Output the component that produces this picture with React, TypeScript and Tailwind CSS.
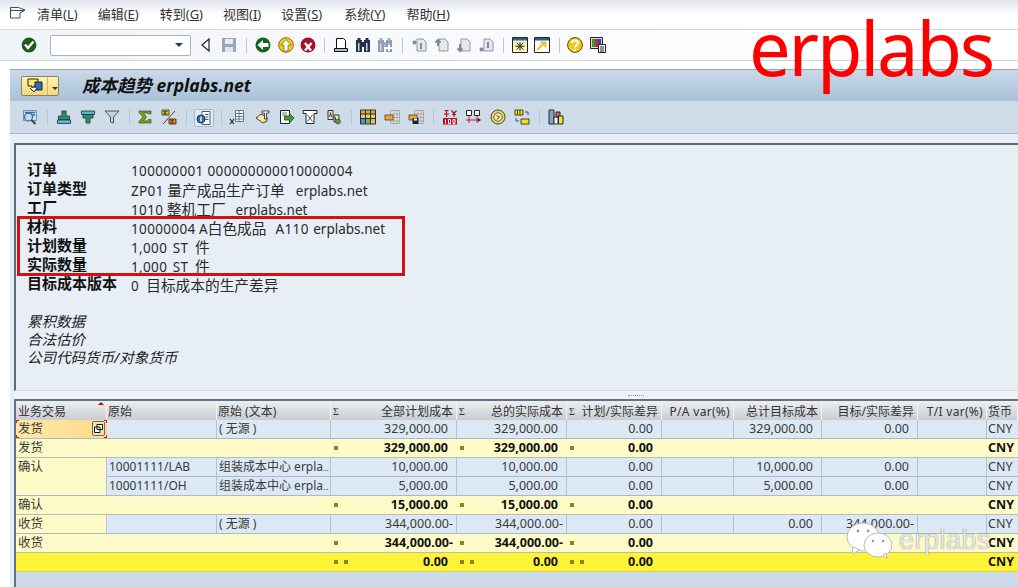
import React from "react";

const colWidths = ["w-[91px]", "w-[110px]", "w-[114px]", "w-[126px]", "w-[110px]", "w-[95px]", "w-[72px]", "w-[88px]", "w-[96px]", "w-[69px]", "w-[31px]"];

const Ic = ({ children, className = "" }: { children: React.ReactNode; className?: string }) => (
    <svg viewBox="0 0 16 16" className={`w-4 h-4 shrink-0 ${className}`}>
        {children}
    </svg>
);

const Slot = ({ children, className = "" }: { children: React.ReactNode; className?: string }) => (
    <div className={`w-[22px] h-4 flex justify-center shrink-0 ${className}`}>{children}</div>
);

const Sep = ({ className = "" }: { className?: string }) => <div className={`w-px h-[15px] bg-[#b9c6d3] shrink-0 ${className}`} />;

const CheckIcon = () => (
    <Ic>
        <circle cx="8" cy="8" r="7.4" fill="#1f5a1e" />
        <path d="M4 7.5 7 11 12.5 4.5" stroke="#fff" strokeWidth="2.4" fill="none" />
    </Ic>
);
const BackTri = () => (
    <Ic>
        <path d="M11 2 4 8l7 6z" fill="#fff" stroke="#222" strokeWidth="1.2" />
    </Ic>
);
const SaveIcon = () => (
    <Ic>
        <path d="M1 1h14v14H1z" fill="#9aa6bb" />
        <path d="M4 2h8v5H4z" fill="#e6eaf2" />
        <path d="M4 10h8v5H4z" fill="#dfe4ee" />
    </Ic>
);
const BackIcon = () => (
    <Ic>
        <circle cx="8" cy="8" r="7.5" fill="#14641f" />
        <path d="M2.5 8 8 3v3h5.5v4H8v3z" fill="#fff" />
    </Ic>
);
const UpIcon = () => (
    <Ic>
        <circle cx="8" cy="8" r="7.3" fill="#f1cc1d" stroke="#8a6b10" />
        <path d="M8 2.5 13 8h-3v6H6V8H3z" fill="#fff" stroke="#5a4a10" strokeWidth=".6" />
    </Ic>
);
const CancelIcon = () => (
    <Ic>
        <circle cx="8" cy="8" r="7.5" fill="#a5102a" />
        <path d="m5 6 6 7.5M11.5 6 5 13.5" stroke="#fff" strokeWidth="2.4" />
    </Ic>
);
const PrintIcon = () => (
    <Ic>
        <path d="M3.5 1.5h7l2 2v8h-9z" fill="#fff" stroke="#111" />
        <path d="M1.5 11.5h13v3h-13z" fill="#aeb8c8" stroke="#111" />
    </Ic>
);
const FindIcon = ({ plus }: { plus?: boolean }) => (
    <Ic>
        <path d="M1 3h6v12H1zM9 3h6v12H9z" fill={plus ? "#8d9ab2" : "#25304a"} />
        <path d="M2.5 1h3v3h-3zM10.5 1h3v3h-3zM7 5h2v5H7z" fill={plus ? "#a7b1c4" : "#25304a"} />
        <path d="M3 6h1.5v8H3zM11 6h1.5v8H11z" fill="#cdd4e2" />
        {plus && <path d="M9 11h6M12 8v6" stroke="#fff" strokeWidth="2" />}
    </Ic>
);
const PageGray = ({ arrow }: { arrow: string }) => (
    <Ic>
        <path d="M5 2h6l3 3v9H5z" fill="#e4e8ef" stroke="#8d98a8" />
        <path d={arrow} stroke="#7f8b9c" strokeWidth="2" fill="none" />
    </Ic>
);
const WinStar = () => (
    <Ic>
        <path d="M.5.5h15v15H.5z" fill="#fdf9b5" stroke="#222" />
        <path d="M1 1h14v2.5H1z" fill="#2a5d94" />
        <path d="M8 5v8.5M3.5 9.2h9M4.5 5.7l7 7M11.5 5.7l-7 7" stroke="#222" />
    </Ic>
);
const WinArrow = () => (
    <Ic>
        <path d="M.5.5h15v15H.5z" fill="#fff" stroke="#222" />
        <path d="M1 1h14v2.5H1z" fill="#2a5d94" />
        <path d="M3 13 10 6.5M6.5 5.5h5v5" stroke="#e3c61a" strokeWidth="2" fill="none" />
    </Ic>
);
const HelpIcon = () => (
    <Ic>
        <circle cx="8" cy="8" r="7.4" fill="#f1c91c" stroke="#5c4708" />
        <path d="M5 6c0-3.5 6-3.5 6 0 0 2-3 2-3 4.5" stroke="#fff" strokeWidth="2" fill="none" />
        <path d="M6.8 12h2.4v2.2H6.8z" fill="#fff" />
    </Ic>
);
const LayoutIcon = () => (
    <Ic>
        <path d="M.5.5h12v11H.5z" fill="#ddd" stroke="#222" />
        <path d="M2 2h3v8H2z" fill="#2f9a3a" />
        <path d="M5 2h3v8H5z" fill="#c62a2a" />
        <path d="M8 2h3v8H8z" fill="#2b3fc0" />
        <path d="M8.5 7.5h7v8h-7z" fill="#fff" stroke="#222" />
        <path d="M10 10h4M10 12h4M10 14h4" stroke="#222" />
    </Ic>
);
const DetailIcon = () => (
    <Ic>
        <path d="M1.5 1.5h13v10h-13z" fill="#cfe0f2" stroke="#7a8ea5" />
        <path d="M3 3.5h10M3 6h10" stroke="#2e6cb0" strokeWidth="1.5" />
        <circle cx="6.5" cy="8" r="4" fill="#c4dbef" stroke="#3d6f9e" strokeWidth="1.3" />
        <path d="m9.5 11 4 4" stroke="#3a4658" strokeWidth="2.2" />
    </Ic>
);
const SortUp = () => (
    <Ic>
        <path d="M6 2h4v5h3.500v4h-11V7H6z" fill="#2f8f6a" stroke="#12352a" strokeWidth=".8" />
        <path d="M1.500 11h13v3.500h-13z" fill="#6fb0d8" stroke="#12352a" strokeWidth=".8" />
    </Ic>
);
const SortDown = () => (
    <Ic>
        <path d="M1.500 2h13v3.500h-13z" fill="#6fb0d8" stroke="#12352a" strokeWidth=".8" />
        <path d="M3 5.500h10v3.500H10v5H6V9H3z" fill="#2f8f6a" stroke="#12352a" strokeWidth=".8" />
    </Ic>
);
const Funnel = () => (
    <Ic>
        <path d="M1 2h14L9.5 8v6l-3-1V8z" fill="#c8cfd8" stroke="#46586c" />
    </Ic>
);
const Sigma = () => (
    <Ic>
        <path d="M2 2h12v3h-2.500L11 4H6.500L9.500 8l-3 4H11l.5-1.500H14V14H2v-1.500L6 8 2 3.500z" fill="#7e9e1d" stroke="#2d3d0b" strokeWidth=".6" />
    </Ic>
);
const SubSigma = () => (
    <Ic>
        <path d="M1 1h7v5H1z" fill="#e9c524" stroke="#5f5210" />
        <path d="M8 10h7v5H8z" fill="#e2882a" stroke="#6a3d10" />
        <path d="M14 2 2 15" stroke="#444" />
        <path d="M6.500 2.500h-4L5 3.800 2.500 5h4M13.500 11h-4l2.500 1.300L9.500 14h4" stroke="#222" strokeWidth=".7" fill="none" />
    </Ic>
);
const DocInfo = () => (
    <div className="w-[20px] h-[18px] flex items-center justify-center bg-[#e3ebf4] border border-[#a9b9ca] rounded-[2px] shrink-0">
        <Ic>
            <path d="M6 1.500h8v13H6z" fill="#fff" stroke="#4a5a70" />
            <path d="M9 4.500h3.500M9 7h3.500M9 9.500h3.500" stroke="#4a5a70" />
            <circle cx="5" cy="9" r="4" fill="#2d6fb6" stroke="#183a60" />
            <path d="M5 6.500v5" stroke="#fff" strokeWidth="1.4" />
        </Ic>
    </div>
);
const Excel = () => (
    <Ic>
        <path d="M6.500 1.500h8v11h-8zM6.500 4.500h8M6.500 7.500h8M6.500 10h8M10 1.500v11" fill="#fff" stroke="#4a5a70" strokeWidth=".8" />
        <path d="m1 10 4 5M5 10l-4 5" stroke="#222" strokeWidth="1.2" />
    </Ic>
);
const Hand = () => (
    <Ic>
        <path d="M1 9 6 5l6 3v4l-4 2z" fill="#f3e4a8" stroke="#4a4020" />
        <path d="M7 2h7v2h-2.500v6h-2V4H7z" fill="#fff" stroke="#222" strokeWidth=".8" />
    </Ic>
);
const Export = () => (
    <Ic>
        <path d="M1.500 1.500h9v13h-9z" fill="#fff" stroke="#222" />
        <path d="M3 4h5M3 6h5" stroke="#6a7a8a" />
        <path d="M5.500 7h5V4.500L15 9l-4.500 5v-3h-5z" fill="#4c9a32" stroke="#1e4a15" strokeWidth=".8" />
    </Ic>
);
const Hourglass = () => (
    <Ic>
        <path d="M1 1.500h14v3h-3v10H4v-10H1z" fill="#fff" stroke="#222" />
        <path d="m5.500 6 5 6.500M10.500 6l-5 6.500" stroke="#555" />
    </Ic>
);
const AbIcon = () => (
    <Ic>
        <path d="M2 1.500h5v9H2z" fill="#f3ecc6" stroke="#333" />
        <path d="M8 6h5v7H8z" fill="#dde8cc" stroke="#333" />
        <circle cx="12" cy="12.500" r="2.500" fill="#5a9a3a" stroke="#244a15" strokeWidth=".6" />
        <path d="M3.500 8 4.500 3.500 5.500 8M9.500 8v3.500" stroke="#222" strokeWidth=".8" fill="none" />
    </Ic>
);
const Grid = () => (
    <Ic>
        <path d="M1 1.500h14v3.500H1z" fill="#e8a33a" />
        <path d="M1 5h14v4H1z" fill="#d8d36a" />
        <path d="M1 9h5v5.500H1z" fill="#4f8fd0" />
        <path d="M6 9h5v5.500H6z" fill="#72b858" />
        <path d="M11 9h4v5.500h-4z" fill="#e2c35a" />
        <path d="M.5 1h15v14H.5zM.5 5h15M.5 9.500h15M5.500 1v14M10.500 1v14" stroke="#2a2a2a" fill="none" />
    </Ic>
);
const GridLoad = ({ save }: { save?: boolean }) => (
    <Ic>
        <path d="M6.500 1.500h9v13h-9zM6.500 5h9M6.500 8.500h9M6.500 12h9M10 1.500v13M13 1.500v13" fill="#e8e8e8" stroke="#a6a6a6" />
        <path d="M1 6h8v5H1z" fill="#e8a93a" stroke="#5c4210" strokeWidth=".8" />
        {save && <path d="M4.500 9h6v6h-6z" fill="#222" />}
        {save && <path d="M6 9.500h3v2H6z" fill="#fff" />}
    </Ic>
);
const Currency = () => (
    <Ic>
        <path d="M1 9h14v6.500H1z" fill="#b80d20" />
        <path d="M2.500 1.500h4M4.500 1.500v6.500M2 5h5M9.500 1.500l2.500 3 2.500-3M12 4.500V8M10 5.500h4" stroke="#b80d20" strokeWidth="1.2" fill="none" />
        <path d="M3.500 10.500v4M6.500 10.500h2v4h-2zM11 10.500h2v4h-2z" stroke="#fff" fill="none" />
    </Ic>
);
const Assign = () => (
    <Ic>
        <path d="M1.500 1.500h5v5h-5zM9.500 1.500h5v5h-5z" fill="#fff" stroke="#222" />
        <path d="M1 11h13M4 7v7M12 7v7" stroke="#c01a2a" />
        <path d="m13 9 3 2-3 2z" fill="#222" />
    </Ic>
);
const Coin = () => (
    <Ic>
        <circle cx="8" cy="8" r="7" fill="#e8d678" stroke="#4d4a20" />
        <circle cx="8" cy="8" r="4.200" fill="#f5eca8" stroke="#6a6630" />
        <path d="M6.500 6.500 9.500 8 7 10.500" stroke="#444" fill="none" />
    </Ic>
);
const Links = () => (
    <Ic>
        <path d="M1 1h8v5H1z" fill="#f5dc2a" stroke="#4a4210" />
        <path d="M7 10h8v5H7z" fill="#f5dc2a" stroke="#4a4210" />
        <path d="M3.500 1.500v4M6 1.500v4" stroke="#4a4210" />
        <path d="M11 3h3v3M2 9v3h3" stroke="#2b4fc0" fill="none" />
    </Ic>
);
const Chart = () => (
    <Ic>
        <path d="M1 1h5v14H1z" fill="#8ea0bc" stroke="#202838" />
        <path d="M6 8h4v7H6z" fill="#fff" stroke="#202838" />
        <path d="M8 3h4v5H8z" fill="#d0616a" stroke="#202838" />
        <path d="M10.500 7h4.500v8h-4.500z" fill="#f3e31c" stroke="#202838" />
    </Ic>
);

const Menu = ({ cn, k, className }: { cn: string; k: string; className: string }) => (
    <span className={`text-[13px] text-[#333] whitespace-nowrap ${className}`}>
        {cn}(<span className="underline">{k}</span>)
    </span>
);

// the original mixes a wider CJK face with wide digits
const C = ({ children, className = "" }: { children: React.ReactNode; className?: string }) => <span className={`text-[14.7px] ${className}`}>{children}</span>;
const D = ({ children, className = "" }: { children: React.ReactNode; className?: string }) => <span className={`tracking-[0.35px] ${className}`}>{children}</span>;

const InfoRow = ({ label, children }: { label: string; children?: React.ReactNode }) => (
    <div className="flex h-[19px] items-center">
        <div className="w-[104px] shrink-0 font-bold text-[15px] leading-none text-[#111] whitespace-nowrap -mt-[3px]">{label}</div>
        <div className="text-[13.5px] leading-none text-[#2a2a2a] whitespace-pre mt-[2px]">{children}</div>
    </div>
);

const Marks = ({ n }: { n: number }) => (
    <span className="absolute left-[3px] top-[7px] flex gap-[6px]">
        <span className="w-1 h-1 bg-[#8c8420]" />
        {n > 1 && <span className="w-1 h-1 bg-[#8c8420]" />}
    </span>
);

const Num = ({ v, w, marks = 0, bold }: { v: string; w: string; marks?: number; bold?: boolean }) => (
    <div className={`relative h-full shrink-0 ${w} border-r ${bold ? "border-transparent" : "border-[#b4c3d2]"} text-right ${v.endsWith("-") ? "pr-[3px]" : "pr-[8px]"} whitespace-nowrap`}>
        {marks > 0 && <Marks n={marks} />}
        {v}
    </div>
);

const Txt = ({ v, w, className = "" }: { v?: React.ReactNode; w: string; className?: string }) => (
    <div className={`h-full shrink-0 ${w} border-r border-[#b4c3d2] pl-[2px] whitespace-nowrap overflow-hidden ${className}`}>{v}</div>
);

const DataRow = ({ k, o, t, n, merged, selected }: { k: string; o?: string; t?: React.ReactNode; n: string[]; merged?: boolean; selected?: boolean }) => (
    <div className="flex h-[19px] leading-[17px] bg-[#dce8f4] text-[#3a3a3a] border-b border-[#a9b9c9]">
        <div className={`relative shrink-0 ${colWidths[0]} bg-[#fffbc8] pl-[2px] ${merged ? "h-[19px]" : "h-full"} ${selected ? "" : "border-r border-[#b4c3d2]"}`}>
            {selected && (
                <div className="absolute inset-0 bg-gradient-to-r from-[#ffe9a8] to-[#ffd98a]">
                    <span className="absolute left-0 top-0 w-[3px] h-[3px] border-l border-t border-[#c81e1e]" />
                    <span className="absolute left-0 bottom-0 w-[3px] h-[3px] border-l border-b border-[#c81e1e]" />
                    <span className="absolute right-0 top-0 w-[3px] h-[3px] border-r border-t border-[#c81e1e]" />
                    <span className="absolute right-0 bottom-0 w-[3px] h-[3px] border-r border-b border-[#c81e1e]" />
                    <span className="absolute right-[2px] top-[1px] w-[13px] h-[15px] rounded-[2px] bg-[#f5e3a8] border border-[#6a6a6a] flex items-center justify-center">
                        <svg viewBox="0 0 9 9" className="w-[9px] h-[9px]">
                            <path d="M3 .5h5.500v5H3zM.5 3h5.500v5.500H.5z" fill="#fff" stroke="#111" />
                        </svg>
                    </span>
                </div>
            )}
            <span className="relative">{k}</span>
        </div>
        <Txt v={o} w={colWidths[1]} className="text-[12px]" />
        <Txt v={t} w={colWidths[2]} className="text-[12px]" />
        <Num v={n[0]} w={colWidths[3]} />
        <Num v={n[1]} w={colWidths[4]} />
        <Num v={n[2]} w={colWidths[5]} />
        <Txt w={colWidths[6]} />
        <Num v={n[3]} w={colWidths[7]} />
        <Num v={n[4]} w={colWidths[8]} />
        <Txt w={colWidths[9]} />
        <div className="pl-[1px]">CNY</div>
    </div>
);

const SumRow = ({ k, a, b, total }: { k?: string; a: string; b: string; total?: boolean }) => (
    <div className={`flex h-[19px] leading-[17px] font-bold text-[#111] border-b ${total ? "bg-[#fff338] border-[#d9cf5a]" : "bg-[#fffbc8] border-[#b9bfae]"}`}>
        <div className="h-full w-[315px] shrink-0 pl-[2px] font-normal text-[#3a3a3a]">{k}</div>
        <Num v={a} w={colWidths[3]} marks={total ? 2 : 1} bold />
        <Num v={b} w={colWidths[4]} marks={total ? 2 : 1} bold />
        <Num v="0.00" w={colWidths[5]} marks={total ? 2 : 1} bold />
        <div className="w-[325px] shrink-0" />
        <div className="pl-[1px]">CNY</div>
    </div>
);

const Head = ({ w, sigma, right, children }: { w: string; sigma?: boolean; right?: boolean; children: React.ReactNode }) => (
    <div className={`relative h-full shrink-0 ${w} border-r border-[#f4f4f4] px-[1px] whitespace-nowrap ${right ? "text-right pr-[3px]" : ""}`}>
        {sigma && <span className="absolute left-[2px] top-0 text-[10px] font-['Liberation_Serif',serif]">Σ</span>}
        {children}
    </div>
);

export default function App() {
    const emptySource = "( 无源 )";
    const cc = (
        <>
            组装成本中心 erpla<span className="text-[7px]">...</span>
        </>
    );
    return (
        <div className="relative w-[1018px] h-[587px] overflow-hidden bg-white font-['Noto_Sans','Noto_Sans_CJK_SC',sans-serif] flex flex-col">
            {/* menu bar */}
            <div className="h-[30px] shrink-0 flex items-center bg-gradient-to-b from-[#e2e5ee] via-white to-white border-b border-[#d4d9e0]">
                <svg viewBox="0 0 16 12" className="w-4 h-3 ml-[10px] -mt-[4px] shrink-0">
                    <path d="M.5.5h8l6.500 2.500-5 3v5h-9.500z" fill="none" stroke="#3c4c62" />
                    <path d="M.5 3.500h14" stroke="#3c4c62" />
                </svg>
                <Menu cn="清单" k="L" className="ml-[11px]" />
                <Menu cn="编辑" k="E" className="ml-[20px]" />
                <Menu cn="转到" k="G" className="ml-[21px]" />
                <Menu cn="视图" k="I" className="ml-[20px]" />
                <Menu cn="设置" k="S" className="ml-[20px]" />
                <Menu cn="系统" k="Y" className="ml-[22px]" />
                <Menu cn="帮助" k="H" className="ml-[21px]" />
            </div>
            {/* system toolbar */}
            <div className="h-[31px] shrink-0 flex items-center pl-[18px] bg-gradient-to-r from-[#f0f3f8] via-[#fbfbfd] to-white border-b border-[#cfd4dc]">
                <Slot><CheckIcon /></Slot>
                <div className="ml-[10px] w-[141px] h-[21px] shrink-0 flex items-center justify-end pr-[7px] bg-white border border-[#aab4c0] rounded-[2px]">
                    <div className="w-0 h-0 border-x-[4px] border-x-transparent border-t-[4px] border-t-[#233a5e]" />
                </div>
                <Slot className="ml-[4px]"><BackTri /></Slot>
                <Slot className="ml-[1px]"><SaveIcon /></Slot>
                <Sep className="ml-[6px]" />
                <Slot className="ml-[5px]"><BackIcon /></Slot>
                <Slot className="ml-px"><UpIcon /></Slot>
                <Slot><CancelIcon /></Slot>
                <Sep className="ml-[5px]" />
                <Slot className="ml-[5px]"><PrintIcon /></Slot>
                <Slot><FindIcon /></Slot>
                <Slot><FindIcon plus /></Slot>
                <Sep className="ml-[6px]" />
                <Slot className="ml-[6px]"><PageGray arrow="M1 4l3 3M4 4 1 7M9 6v6" /></Slot>
                <Slot><PageGray arrow="M4 9V3M1.500 5.500 4 3l2.500 2.500" /></Slot>
                <Slot><PageGray arrow="M4 7v7M1.500 11.500 4 14l2.500-2.500" /></Slot>
                <Slot className="ml-px"><PageGray arrow="M1 11l3 3M4 11l-3 3M9 5v6" /></Slot>
                <Sep className="ml-[5px]" />
                <Slot className="ml-[5px]"><WinStar /></Slot>
                <Slot><WinArrow /></Slot>
                <Sep className="ml-[6px]" />
                <Slot className="ml-[4px]"><HelpIcon /></Slot>
                <Slot className="ml-px"><LayoutIcon /></Slot>
            </div>
            <div className="h-[8px] shrink-0 bg-white" />
            <div className="flex-1 min-h-0 pl-[10px] flex flex-col">
                {/* title */}
                <div className="h-[32px] shrink-0 flex items-center pl-[11px] bg-gradient-to-b from-[#c9d9e8] to-[#a9c1d8] border-t border-[#93a8bc]">
                    <div className="w-[38px] h-[20px] shrink-0 flex items-center bg-gradient-to-b from-[#fff3b8] to-[#f5d77c] border border-[#8a8258] rounded-[2px]">
                        <div className="w-[26px] flex justify-center border-r border-[#d2b868] h-full items-center">
                            <svg viewBox="0 0 16 16" className="w-4 h-4">
                                <path d="M1 1h10v7H7l-2 3V8H1z" fill="#f8ec6a" stroke="#222" />
                                <path d="M8 4h7v8H8z" fill="#2f6fc0" stroke="#222" />
                                <path d="M3 10 7 14l3-4" fill="#fff" stroke="#222" />
                            </svg>
                        </div>
                        <div className="ml-[4px] mt-[5px] w-0 h-0 border-x-[3px] border-x-transparent border-t-[3px] border-t-[#333]" />
                    </div>
                    <div className="ml-[23px] text-[17.5px] font-bold italic text-[#111] whitespace-nowrap">成本趋势 erplabs.net</div>
                </div>
                {/* application toolbar */}
                <div className="h-[33px] shrink-0 flex items-center pl-[9px] bg-[#cedbe8] border-b border-[#a9b6c4]">
                    <Slot><DetailIcon /></Slot>
                    <Sep className="ml-[6px]" />
                    <Slot className="ml-[5px]"><SortUp /></Slot>
                    <Slot className="ml-[2px]"><SortDown /></Slot>
                    <Slot className="ml-[2px]"><Funnel /></Slot>
                    <Sep className="ml-[6px]" />
                    <Slot className="ml-[4px]"><Sigma /></Slot>
                    <Slot className="ml-[2px]"><SubSigma /></Slot>
                    <Sep className="ml-[6px]" />
                    <Slot className="ml-[6px]"><DocInfo /></Slot>
                    <Sep className="ml-[6px]" />
                    <Slot className="ml-[4px]"><Excel /></Slot>
                    <Slot className="ml-[4px]"><Hand /></Slot>
                    <Slot className="ml-[2px]"><Export /></Slot>
                    <Slot className="ml-[1px]"><Hourglass /></Slot>
                    <Slot className="ml-[2px]"><AbIcon /></Slot>
                    <Sep className="ml-[6px]" />
                    <Slot className="ml-[5px]"><Grid /></Slot>
                    <Slot className="ml-[2px]"><GridLoad /></Slot>
                    <Slot className="ml-[2px]"><GridLoad save /></Slot>
                    <Sep className="ml-[6px]" />
                    <Slot className="ml-[5px]"><Currency /></Slot>
                    <Slot className="ml-px"><Assign /></Slot>
                    <Slot className="ml-[3px]"><Coin /></Slot>
                    <Slot className="ml-[2px]"><Links /></Slot>
                    <Sep className="ml-[6px]" />
                    <Slot className="ml-[5px]"><Chart /></Slot>
                </div>
                {/* content */}
                <div className="flex-1 min-h-0 bg-[#e8eef6] pl-[4px] pt-[9px] flex flex-col">
                    <div className="h-[248px] shrink-0 border-t-[2px] border-l-[2px] border-[#5e6b78] pl-[11px] pt-[16px] border-b border-b-[#d5dce4]">
                        <InfoRow label="订单"><D>100000001 000000000010000004</D></InfoRow>
                        <InfoRow label="订单类型"><D>ZP01</D> <C>量产成品生产订单</C>  <span className="ml-[4px]">erplabs.net</span></InfoRow>
                        <InfoRow label="工厂"><D>1010</D> <C>整机工厂</C>  <span className="ml-[3px]">erplabs.net</span></InfoRow>
                        <InfoRow label="材料"><D>10000004</D> A<C>白色成品</C>  <D className="ml-[2px]">A110</D> <span className="ml-[1px]">erplabs.net</span></InfoRow>
                        <InfoRow label="计划数量"><D>1,000</D> <D className="ml-[2px]">ST</D> <C className="ml-[3px]">件</C></InfoRow>
                        <InfoRow label="实际数量"><D>1,000</D> <D className="ml-[2px]">ST</D> <C className="ml-[3px]">件</C></InfoRow>
                        <InfoRow label="目标成本版本">0 <C className="ml-[4px]">目标成本的生产差异</C></InfoRow>
                        <div className="mt-[18px] text-[14.5px] leading-[18px] italic text-[#222]">
                            <div>累积数据</div>
                            <div>合法估价</div>
                            <div>公司代码货币/对象货币</div>
                        </div>
                    </div>
                    {/* sash */}
                    <div className="h-[8px] shrink-0 flex justify-center items-center pl-[240px] bg-[#eef2f7]">
                        <div className="w-[16px] border-t border-dotted border-[#8e9aa8]" />
                    </div>
                    {/* grid */}
                    <div className="flex-1 min-h-0 border-t-[2px] border-l-[2px] border-[#5c7388] bg-[#cddbe9] text-[12.5px]">
                        <div className="flex h-[19px] leading-[21px] text-[12px] text-[#333] bg-gradient-to-b from-[#eeeeee] to-[#c9cdd2]">
                            <div className={`relative h-full shrink-0 ${colWidths[0]} border-r border-[#f4f4f4] pl-[2px]`}>
                                业务交易
                                <span className="absolute right-[2px] top-[1px] w-0 h-0 border-x-[3px] border-x-transparent border-b-[3px] border-b-[#b01010]" />
                            </div>
                            <Head w={colWidths[1]}>原始</Head>
                            <Head w={colWidths[2]}>原始 (文本)</Head>
                            <Head w={colWidths[3]} sigma right>全部计划成本</Head>
                            <Head w={colWidths[4]} sigma right>总的实际成本</Head>
                            <Head w={colWidths[5]} sigma right>计划/实际差异</Head>
                            <Head w={colWidths[6]} right><span className="tracking-[0.3px]">P/A var(%)</span></Head>
                            <Head w={colWidths[7]} right>总计目标成本</Head>
                            <Head w={colWidths[8]} right>目标/实际差异</Head>
                            <Head w={colWidths[9]} right><span className="tracking-[0.3px]">T/I var(%)</span></Head>
                            <Head w={colWidths[10]}>货币</Head>
                        </div>
                        <DataRow selected k="发货" t={emptySource} n={["329,000.00", "329,000.00", "0.00", "329,000.00", "0.00"]} />
                        <SumRow k="发货" a="329,000.00" b="329,000.00" />
                        <DataRow merged k="确认" o="10001111/LAB" t={cc} n={["10,000.00", "10,000.00", "0.00", "10,000.00", "0.00"]} />
                        <DataRow k="" o="10001111/OH" t={cc} n={["5,000.00", "5,000.00", "0.00", "5,000.00", "0.00"]} />
                        <SumRow k="确认" a="15,000.00" b="15,000.00" />
                        <DataRow k="收货" t={emptySource} n={["344,000.00-", "344,000.00-", "0.00", "0.00", "344,000.00-"]} />
                        <SumRow k="收货" a="344,000.00-" b="344,000.00-" />
                        <SumRow a="0.00" b="0.00" total />
                    </div>
                </div>
            </div>
            {/* red marking box over the header info */}
            <div className="absolute left-[17px] top-[216px] w-[388px] h-[60px] border-[3px] border-[#d80f0f]" />
            {/* big red watermark */}
            <div className="absolute left-[749px] top-0 text-[74px] leading-[96px] tracking-[-2.2px] text-[#ff0000]">erplabs</div>
            {/* wechat watermark */}
            <div className="absolute left-[846px] top-[522px] flex items-center">
                <svg viewBox="0 0 46 37" className="w-[46px] h-[37px]">
                    <ellipse cx="17" cy="15" rx="16" ry="14" fill="#fff" stroke="#bbb" />
                    <path d="m7 25-1 7 8-4z" fill="#fff" stroke="#bbb" />
                    <ellipse cx="32" cy="23" rx="14" ry="12" fill="#fff" stroke="#bbb" />
                    <path d="m37 33 4 4-1-6z" fill="#fff" stroke="#bbb" />
                    <circle cx="12" cy="9" r="1.400" fill="#9a9a9a" />
                    <circle cx="22" cy="9" r="1.400" fill="#9a9a9a" />
                    <circle cx="27" cy="19" r="1.300" fill="#9a9a9a" />
                    <circle cx="37" cy="19" r="1.300" fill="#9a9a9a" />
                </svg>
                <span className="ml-[7px] text-[27px] leading-none tracking-[0.5px] font-['Liberation_Sans',sans-serif] text-[#e4e7eb] [text-shadow:0_0_1px_#666]">erplabs</span>
            </div>
        </div>
    );
}
